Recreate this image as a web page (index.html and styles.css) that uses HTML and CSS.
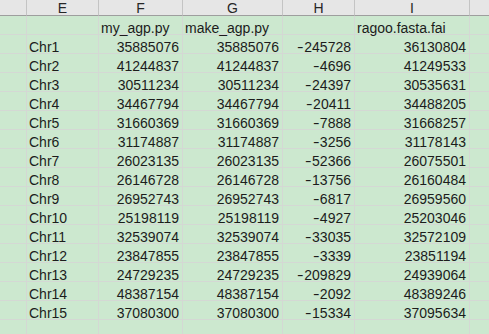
FILE: index.html
```html
<!DOCTYPE html>
<html>
<head>
<meta charset="utf-8">
<link rel="stylesheet" href="styles.css">
</head>
<body>
<div class="sheet">
  <div class="row head">
    <div class="c c0"></div><div class="c">E</div><div class="c">F</div><div class="c">G</div><div class="c">H</div><div class="c">I</div><div class="c cj"></div>
  </div>
  <div class="row">
    <div class="c c0"></div><div class="c"></div><div class="c">my_agp.py</div><div class="c">make_agp.py</div><div class="c"></div><div class="c">ragoo.fasta.fai</div><div class="c cj"></div>
  </div>
  <div class="row"><div class="c c0"></div><div class="c">Chr1</div><div class="c n">35885076</div><div class="c n">35885076</div><div class="c n"><span class="m">-</span>245728</div><div class="c n">36130804</div><div class="c cj"></div></div>
  <div class="row"><div class="c c0"></div><div class="c">Chr2</div><div class="c n">41244837</div><div class="c n">41244837</div><div class="c n"><span class="m">-</span>4696</div><div class="c n">41249533</div><div class="c cj"></div></div>
  <div class="row"><div class="c c0"></div><div class="c">Chr3</div><div class="c n">30511234</div><div class="c n">30511234</div><div class="c n"><span class="m">-</span>24397</div><div class="c n">30535631</div><div class="c cj"></div></div>
  <div class="row"><div class="c c0"></div><div class="c">Chr4</div><div class="c n">34467794</div><div class="c n">34467794</div><div class="c n"><span class="m">-</span>20411</div><div class="c n">34488205</div><div class="c cj"></div></div>
  <div class="row"><div class="c c0"></div><div class="c">Chr5</div><div class="c n">31660369</div><div class="c n">31660369</div><div class="c n"><span class="m">-</span>7888</div><div class="c n">31668257</div><div class="c cj"></div></div>
  <div class="row"><div class="c c0"></div><div class="c">Chr6</div><div class="c n">31174887</div><div class="c n">31174887</div><div class="c n"><span class="m">-</span>3256</div><div class="c n">31178143</div><div class="c cj"></div></div>
  <div class="row"><div class="c c0"></div><div class="c">Chr7</div><div class="c n">26023135</div><div class="c n">26023135</div><div class="c n"><span class="m">-</span>52366</div><div class="c n">26075501</div><div class="c cj"></div></div>
  <div class="row"><div class="c c0"></div><div class="c">Chr8</div><div class="c n">26146728</div><div class="c n">26146728</div><div class="c n"><span class="m">-</span>13756</div><div class="c n">26160484</div><div class="c cj"></div></div>
  <div class="row"><div class="c c0"></div><div class="c">Chr9</div><div class="c n">26952743</div><div class="c n">26952743</div><div class="c n"><span class="m">-</span>6817</div><div class="c n">26959560</div><div class="c cj"></div></div>
  <div class="row"><div class="c c0"></div><div class="c">Chr10</div><div class="c n">25198119</div><div class="c n">25198119</div><div class="c n"><span class="m">-</span>4927</div><div class="c n">25203046</div><div class="c cj"></div></div>
  <div class="row"><div class="c c0"></div><div class="c">Chr11</div><div class="c n">32539074</div><div class="c n">32539074</div><div class="c n"><span class="m">-</span>33035</div><div class="c n">32572109</div><div class="c cj"></div></div>
  <div class="row"><div class="c c0"></div><div class="c">Chr12</div><div class="c n">23847855</div><div class="c n">23847855</div><div class="c n"><span class="m">-</span>3339</div><div class="c n">23851194</div><div class="c cj"></div></div>
  <div class="row"><div class="c c0"></div><div class="c">Chr13</div><div class="c n">24729235</div><div class="c n">24729235</div><div class="c n"><span class="m">-</span>209829</div><div class="c n">24939064</div><div class="c cj"></div></div>
  <div class="row"><div class="c c0"></div><div class="c">Chr14</div><div class="c n">48387154</div><div class="c n">48387154</div><div class="c n"><span class="m">-</span>2092</div><div class="c n">48389246</div><div class="c cj"></div></div>
  <div class="row"><div class="c c0"></div><div class="c">Chr15</div><div class="c n">37080300</div><div class="c n">37080300</div><div class="c n"><span class="m">-</span>15334</div><div class="c n">37095634</div><div class="c cj"></div></div>
  <div class="row"><div class="c c0"></div><div class="c"></div><div class="c"></div><div class="c"></div><div class="c"></div><div class="c"></div><div class="c cj"></div></div>
</div>
</body>
</html>
```
FILE: styles.css
```css
html, body {
  margin: 0;
  padding: 0;
  width: 489px;
  height: 334px;
  overflow: hidden;
  background: #cce8cf;
}
.sheet {
  font-family: "Liberation Sans", Arial, sans-serif;
  font-size: 14px;
  color: #1c1c1c;
}
.row {
  display: grid;
  grid-template-columns: 27px 72px 84px 100px 72px 115px 19px;
  height: 19px;
}
.c {
  box-sizing: border-box;
  height: 19px;
  border-right: 1px solid #d4d8d4;
  border-bottom: 1px solid #d4d8d4;
  padding: 3px 0 0 2px;
  line-height: 18px;
  white-space: nowrap;
  overflow: visible;
}
.n {
  text-align: right;
  padding: 3px 3px 0 0;
}
.m {
  display: inline-block;
  transform: scaleX(1.4);
  margin-left: 1px;
  margin-right: 1.5px;
}
.cj { border-right: none; }
.head {
  height: 16px;
  background: #e6e6e6;
}
.head .c {
  height: 16px;
  border-right: 1px solid #c4c4c4;
  border-bottom: 1px solid #9e9e9e;
  padding: 0;
  text-align: center;
  line-height: 16px;
  color: #262626;
}
.head .cj { border-right: none; }
```
